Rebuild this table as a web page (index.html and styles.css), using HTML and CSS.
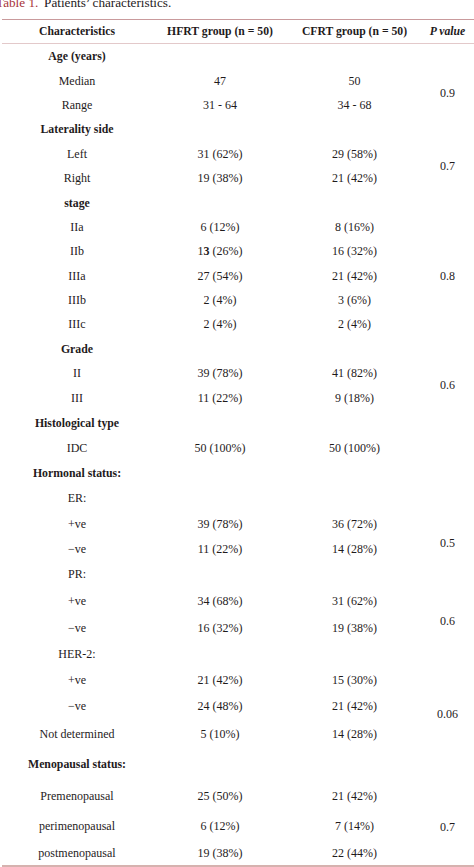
FILE: index.html
```html
<!DOCTYPE html>
<html lang="en">
<head>
<meta charset="utf-8">
<title>Table 1. Patients' characteristics.</title>
<link rel="stylesheet" href="styles.css">
</head>
<body>
<p class="caption"><span class="label">Table 1.</span> Patients’ characteristics.</p>
<table class="tbl">
  <colgroup>
    <col class="c1"><col class="c2"><col class="c3"><col class="c4">
  </colgroup>
  <thead>
    <tr class="head">
      <th>Characteristics</th>
      <th>HFRT group (n = 50)</th>
      <th>CFRT group (n = 50)</th>
      <th><i>P value</i></th>
    </tr>
  </thead>
  <tbody>
    <tr><td class="grp">Age (years)</td><td></td><td></td><td></td></tr>
    <tr><td>Median</td><td>47</td><td>50</td><td rowspan="2">0.9</td></tr>
    <tr><td>Range</td><td>31 - 64</td><td>34 - 68</td></tr>
    <tr><td class="grp">Laterality side</td><td></td><td></td><td></td></tr>
    <tr><td>Left</td><td>31 (62%)</td><td>29 (58%)</td><td rowspan="2">0.7</td></tr>
    <tr><td>Right</td><td>19 (38%)</td><td>21 (42%)</td></tr>
    <tr><td class="grp">stage</td><td></td><td></td><td></td></tr>
    <tr><td>IIa</td><td>6 (12%)</td><td>8 (16%)</td><td rowspan="5">0.8</td></tr>
    <tr><td>IIb</td><td>1<b>3</b> (26%)</td><td>16 (32%)</td></tr>
    <tr><td>IIIa</td><td>27 (54%)</td><td>21 (42%)</td></tr>
    <tr><td>IIIb</td><td>2 (4%)</td><td>3 (6%)</td></tr>
    <tr><td>IIIc</td><td>2 (4%)</td><td>2 (4%)</td></tr>
    <tr><td class="grp">Grade</td><td></td><td></td><td></td></tr>
    <tr><td>II</td><td>39 (78%)</td><td>41 (82%)</td><td rowspan="2">0.6</td></tr>
    <tr><td>III</td><td>11 (22%)</td><td>9 (18%)</td></tr>
    <tr class="r25"><td class="grp">Histological type</td><td></td><td></td><td></td></tr>
    <tr class="r25"><td>IDC</td><td>50 (100%)</td><td>50 (100%)</td><td></td></tr>
    <tr class="r25"><td class="grp">Hormonal status:</td><td></td><td></td><td></td></tr>
    <tr class="r25"><td>ER:</td><td></td><td></td><td></td></tr>
    <tr class="r25"><td>+ve</td><td>39 (78%)</td><td>36 (72%)</td><td rowspan="2" class="low">0.5</td></tr>
    <tr class="r25"><td>−ve</td><td>11 (22%)</td><td>14 (28%)</td></tr>
    <tr class="r25"><td>PR:</td><td></td><td></td><td></td></tr>
    <tr class="r27"><td>+ve</td><td>34 (68%)</td><td>31 (62%)</td><td rowspan="2" class="low">0.6</td></tr>
    <tr class="r27"><td>−ve</td><td>16 (32%)</td><td>19 (38%)</td></tr>
    <tr class="r25h"><td>HER-2:</td><td></td><td></td><td></td></tr>
    <tr class="r25h"><td>+ve</td><td>21 (42%)</td><td>15 (30%)</td><td rowspan="3" class="low">0.06</td></tr>
    <tr class="r27"><td>−ve</td><td>24 (48%)</td><td>21 (42%)</td></tr>
    <tr class="r29"><td>Not determined</td><td>5 (10%)</td><td>14 (28%)</td></tr>
    <tr class="r31"><td class="grp">Menopausal status:</td><td></td><td></td><td></td></tr>
    <tr class="r31"><td>Premenopausal</td><td>25 (50%)</td><td>21 (42%)</td><td rowspan="3" class="low2">0.7</td></tr>
    <tr class="r28"><td>perimenopausal</td><td>6 (12%)</td><td>7 (14%)</td></tr>
    <tr class="r25"><td>postmenopausal</td><td>19 (38%)</td><td>22 (44%)</td></tr>
  </tbody>
</table>
</body>
</html>
```
FILE: styles.css
```css
html, body {
  margin: 0;
  padding: 0;
  background: #ffffff;
}

body {
  font-family: "Liberation Serif", "Times New Roman", serif;
  color: #1f1b1c;
  width: 474px;
  overflow: hidden;
}

.caption {
  margin: -4px 0 0 -4px;
  font-size: 13.2px;
  line-height: 13px;
  white-space: nowrap;
}

.caption .label {
  color: #a8343a;
  margin-right: 2.5px;
}

.tbl {
  margin: 10px 0 0 2px;
  width: 472px;
  border-collapse: collapse;
  table-layout: fixed;
  font-size: 12px;
  border-top: 1px solid #c99a9c;
  border-bottom: 2px solid #d6b2af;
}

.c1 { width: 150px; }
.c2 { width: 136px; }
.c3 { width: 133px; }
.c4 { width: 53px; }

.tbl th {
  height: 23px;
  padding: 0;
  font-weight: bold;
  font-size: 11.7px;
  text-align: center;
  vertical-align: middle;
  border-bottom: 1px solid #e3c9ca;
  white-space: nowrap;
}

.tbl td {
  height: 24.4px;
  padding: 0;
  text-align: center;
  vertical-align: middle;
  line-height: 14px;
  white-space: nowrap;
}

.tbl td.grp {
  font-weight: bold;
  font-size: 11.8px;
}

.tbl tr.r25 td { height: 25.3px; }
.tbl tr.r25h td { height: 25.5px; }
.tbl tr.r27 td { height: 27.3px; }
.tbl tr.r29 td { height: 28.8px; }
.tbl tr.r31 td { height: 31.5px; }
.tbl tr.r28 td { height: 28.3px; }

.tbl td[rowspan] { height: auto; }

.tbl td.low {
  padding-top: 13px;
}

.tbl td.low2 {
  padding-top: 8px;
}
```
